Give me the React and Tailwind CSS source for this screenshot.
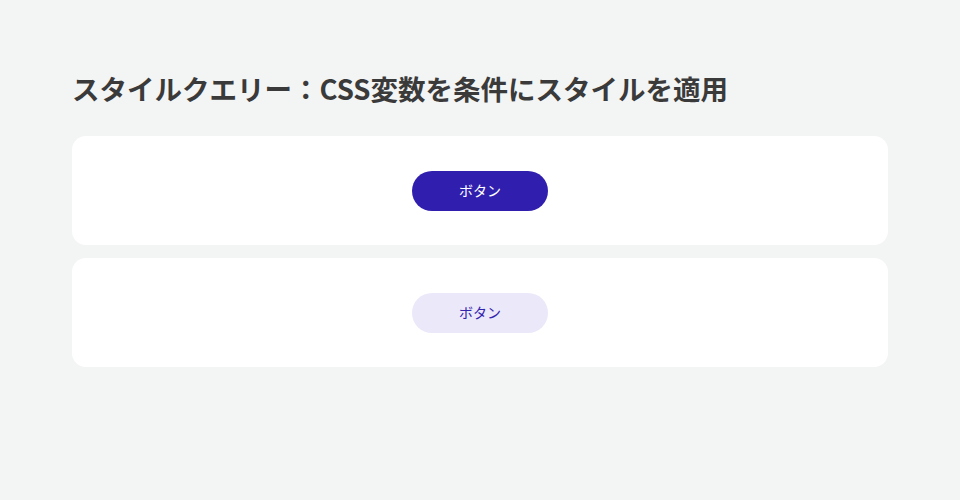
export default function App() {
  return (
    <div className="min-h-screen bg-[#f3f4f4] px-[72px] pt-[66px] font-['Noto_Sans_CJK_JP','Noto_Sans',sans-serif]">
      <h1 className="text-[27.5px] font-bold leading-[44px] text-[#3a3a3a]">
        スタイルクエリー：CSS変数を条件にスタイルを適用
      </h1>
      <div className="mt-[26px] flex flex-col gap-[13px]">
        <div className="flex h-[109px] items-center justify-center rounded-[14px] bg-white">
          <button className="h-[40px] w-[136px] rounded-full bg-[#301fae] text-[14px] text-white">
            ボタン
          </button>
        </div>
        <div className="flex h-[109px] items-center justify-center rounded-[14px] bg-white">
          <button className="h-[40px] w-[136px] rounded-full bg-[#ebe8fa] text-[14px] text-[#3324ae]">
            ボタン
          </button>
        </div>
      </div>
    </div>
  );
}
